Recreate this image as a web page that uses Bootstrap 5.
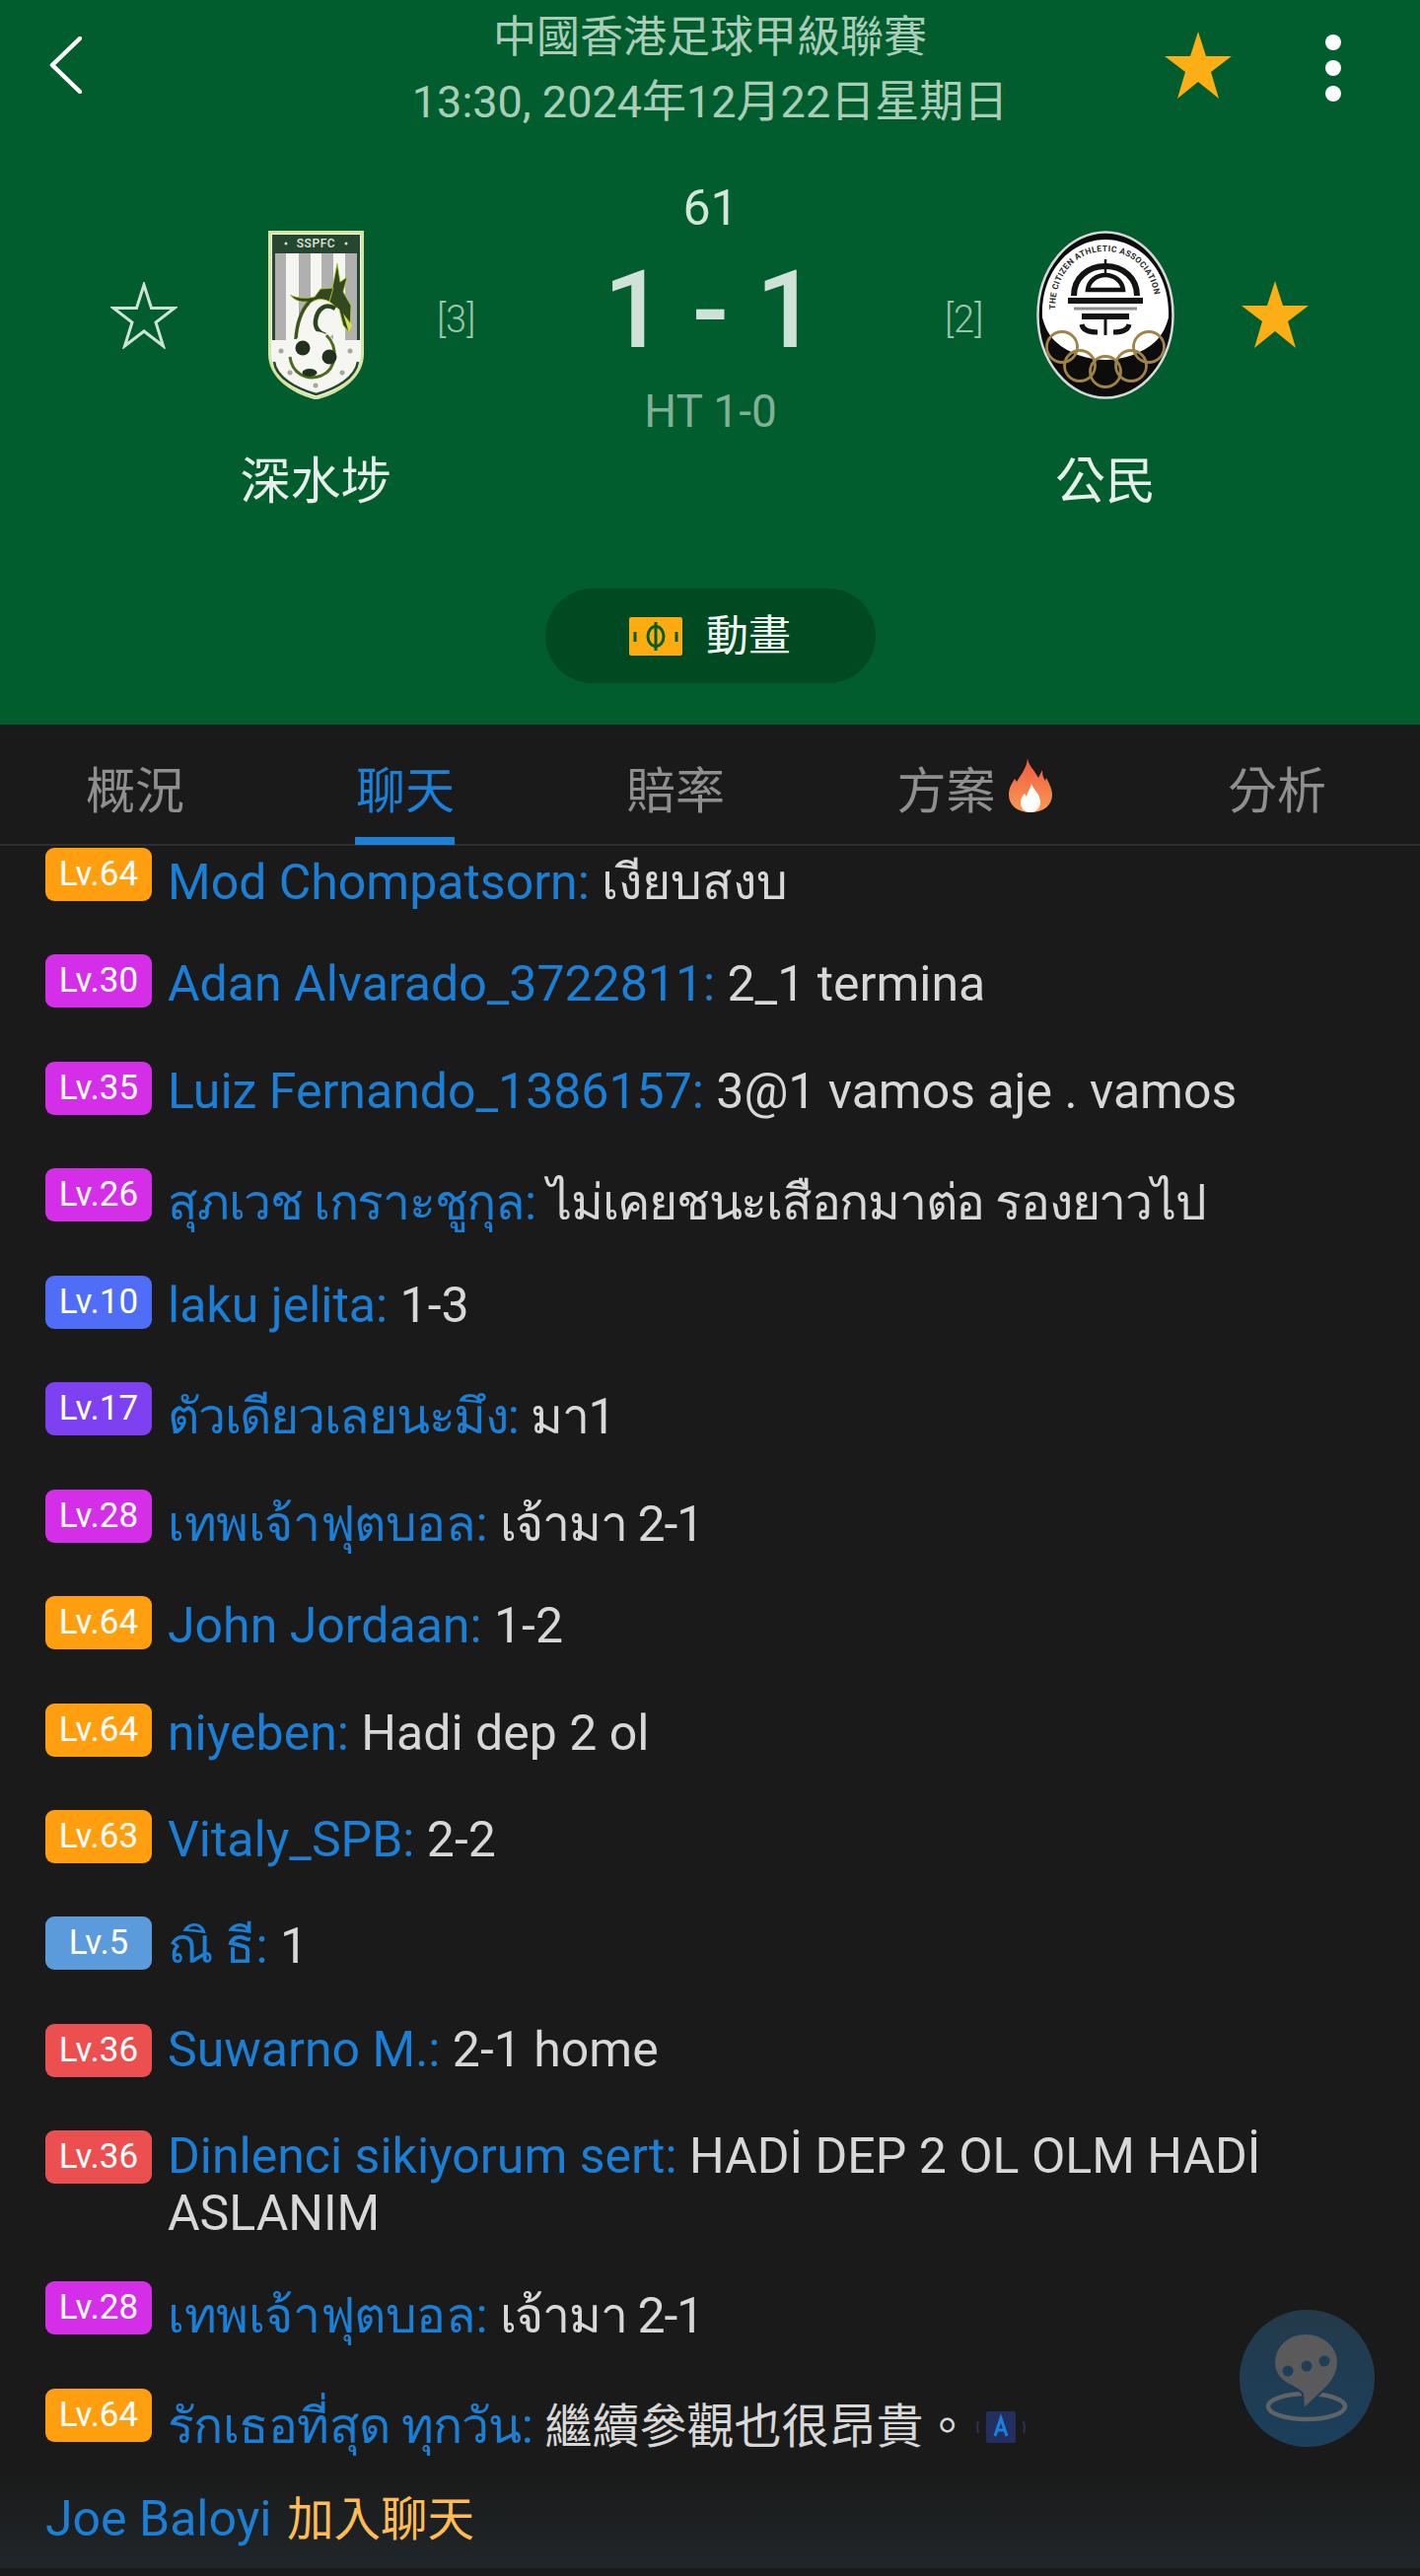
<!DOCTYPE html>
<html lang="zh-Hant">
<head>
    <meta charset="UTF-8">
    <link href="https://cdn.jsdelivr.net/npm/bootstrap@5.3.0/dist/css/bootstrap.min.css" rel="stylesheet">
    <style>
        html, body { height: 100%; }
        body {
            background: #1a1a1a;
            font-family: Roboto, "Noto Sans", "Noto Sans CJK TC", sans-serif;
            color: #d8d8d8;
            overflow: hidden;
        }
        .app-shell { height: 2613px; position: relative; }

        /* header */
        .match-head { background: #015d2d; height: 735px; flex: none; }
        .top-bar { height: 137px; padding-top: 5px; }
        .top-side { width: 300px; flex: none; }
        .back-icon { width: 33px; height: 58px; margin: 32px 0 0 50px; }
        .league { flex: 1; text-align: center; font-size: 44px; line-height: 66px; color: #a9cdb9; white-space: nowrap; }
        .league-time { font-size: 45px; }
        .fav-top { width: 68px; height: 68px; margin-top: 27px; margin-right: 95px; flex: none; }
        .dots { width: 16px; margin: 25px 80px 0 0; flex: none; }
        .dots i { display: block; width: 16px; height: 16px; border-radius: 50%; background: #fff; margin: 5px 0 10px; }

        .score-row { padding: 42px 0 0 112px; }
        .fav-star { width: 68px; height: 68px; margin-top: 107px; flex: none; }
        .team { width: 160px; flex: none; text-align: center; padding-top: 55px; }
        .team-home { margin-left: 60px; }
        .team-logo { height: 171px; display: block; margin: 0 auto; }
        .team-name { font-size: 51px; line-height: 60px; color: #e6efe9; margin-top: 54px; white-space: nowrap; }
        .rank { width: 38px; flex: none; font-size: 38px; line-height: 44px; color: #9cc4ae; margin-top: 123px; text-align: center; font-weight: 300; }
        .rank-home { margin-left: 43px; margin-right: 1px; }
        .rank-away { margin-left: -1px; margin-right: 45px; }
        .centre-col { width: 477px; flex: none; text-align: center; }
        .minute { font-size: 50px; line-height: 60px; color: #d3e6da; margin-top: 2px; }
        .scoreline { font-size: 110px; line-height: 130px; font-weight: 500; color: #cfe2d7; margin-top: 9px; }
        .half-time { font-size: 46px; line-height: 50px; color: #80b096; margin-top: 12px; }
        .fav-away { margin-left: 58px; margin-top: 106px; }

        .anim-pill {
            width: 335px; height: 96px; margin: 78px auto 0 553px; border-radius: 48px;
            background: #014a21; color: #f2f6f3; font-size: 43px; border: 0; padding: 0 0 0 85px;
        }
        .pitch-icon { width: 54px; height: 39px; margin-right: 24px; flex: none; }

        /* tabs */
        .tab-strip { height: 123px; flex: none; background: #1a1a1a; border-bottom: 2px solid #2f2f2f; }
        .tab-link {
            width: 274px; flex: none; text-align: center; font-size: 50px; line-height: 80px; padding-top: 28px; height: 122px; color: #8f8f8f;
            position: relative; text-decoration: none;
        }
        .tab-wide { width: 336px; padding-right: 4px; }
        .tab-on { color: #1a80d8; }
        .tab-on::after { content: ""; position: absolute; left: 86px; width: 101px; bottom: 0; height: 8px; background: #1a80d8; }
        .flame { width: 44px; height: 55px; margin: -20px 0 0 13px; vertical-align: middle; }

        /* chat */
        .chat-list { flex: 1; overflow: hidden; padding: 2px 40px 0 46px; }
        .chat-row { display: flex; align-items: flex-start; margin-bottom: 50.45px; }
        .chat-row-wrap { margin-bottom: 37px; }
        .lv-tag {
            flex: none; width: 108px; height: 54px; border-radius: 9px; color: #fff; font-size: 35px; line-height: 54px;
            text-align: center; margin-right: 16px;
        }
        .lv-orange { background: #ff9f0f; }
        .lv-magenta { background: #d52ee9; }
        .lv-blue { background: #4f6df6; }
        .lv-purple { background: #7d41f2; }
        .lv-sky { background: #5b9bdc; }
        .lv-red { background: #ec4f50; }
        .chat-text { font-size: 50px; line-height: 58px; padding-top: 1px; margin-bottom: -1px; }
        .chat-thai { padding-top: 6px; margin-bottom: -6px; }
        .chat-low { padding-top: 9px; margin-bottom: -9px; }
        .chat-high { padding-top: 0; margin: -3px 0 3px; }
        .chat-name { color: #1b7fd6; }
        .th-tight { letter-spacing: -1.25px; }
        .th-snug { letter-spacing: -.4px; }
        .th-mid { letter-spacing: -.75px; }
        .cjk-msg { font-size: 48px; }
        .trans-mark { width: 50px; height: 32px; margin-left: 6px; vertical-align: 0; }

        /* footer */
        .join-bar {
            flex: none; height: 95px; margin-bottom: 8px; padding: 16px 0 0 46px; font-size: 50px; line-height: 58px;
            background: linear-gradient(#1a1a1a, #20262a);
        }
        .join-bar span { color: #ffbb55; font-size: 47.500px; margin-left: 3px; }
        .room-btn { position: absolute; left: 1257px; top: 2343px; width: 137px; height: 139px; }
    </style>
</head>
<body>
<div class="app-shell d-flex flex-column">
    <div class="match-head">
        <div class="top-bar d-flex">
            <div class="top-side">
                <svg class="back-icon" viewBox="0 0 33 58"><path d="M31 2 3 29l28 27" fill="none" stroke="#fff" stroke-width="4.500" stroke-linecap="round" stroke-linejoin="round"/></svg>
            </div>
            <div class="league">
                <div>中國香港足球甲級聯賽</div>
                <div class="league-time">13:30, 2024年12月22日星期日</div>
            </div>
            <div class="top-side d-flex justify-content-end">
                <svg class="fav-top" viewBox="0 0 68 68"><path d="M34 0l8 25h26L47 41l8 27-21-17-21 17 8-27L0 25h26z" fill="#fcae16"/></svg>
                <div class="dots"><i></i><i></i><i></i></div>
            </div>
        </div>

        <div class="score-row d-flex">
            <svg class="fav-star" viewBox="0 0 68 68"><path d="M34 3l7.500 23.500H65L46 41l7.500 24L34 50 14.500 65 22 41 3 26.500h23.500z" fill="none" stroke="#cfe2d7" stroke-width="3"/></svg>
            <div class="team team-home">
                <svg class="team-logo" viewBox="0 0 97 171">
                    <path d="M1.500 1.500h94V125c0 24-24 39-47 45C25.500 164 1.500 149 1.500 125z" fill="#f5f5f1" stroke="#d9e3a0" stroke-width="3"/>
                    <path d="M4 4h89v19H4z" fill="#26472f"/>
                    <path d="M4 23h3v88H4zM90 23h3v88h-3z" fill="#26472f"/>
                    <path d="M7 23h11v88H7zM31 23h12v88H31zM54 23h12v88H54zM78 23h12v88H78z" fill="#b0b0b0"/>
                    <text x="48.500" y="17" text-anchor="middle" font-size="12" fill="#dfe3dc" font-family="Roboto" font-weight="500" letter-spacing=".6">SSPFC</text>
                    <circle cx="18" cy="13" r="1.500" fill="#dfe3dc"/><circle cx="79" cy="13" r="1.500" fill="#dfe3dc"/>
                    <path d="M41 72c8-7 22-6 31 8l4 18-14 10-34 4c1-16 5-30 13-40z" fill="#f5f5f1"/>
                    <path d="M70 33l3 19 7-5-4 15 8 14-1 28-7-8-4-16-10-8 3-14z" fill="#33481f" stroke="#b9cf2e" stroke-width=".8"/>
                    <path d="M22 65c8 4 18 4 25 2l6-8 13-1-4 14c-12-6-20 0-26 10l4-10c-8 1-14-2-18-7z" fill="#33481f" stroke="#b9cf2e" stroke-width=".8"/>
                    <path d="M41 73c-8 9-12 22-13 37" fill="none" stroke="#3c5618" stroke-width="3.500"/>
                    <path d="M68 79c-10-6-18 0-20 12-1 8 4 13 10 15" fill="none" stroke="#2c4420" stroke-width="4.500"/>
                    <path d="M76 84l6 20 3-8z" fill="#d3e04a"/>
                    <circle cx="47" cy="127" r="25" fill="#f6f6f2"/>
                    <path d="M59 106c12 12 11 34-5 41-16 6-30-3-32-19" fill="none" stroke="#4c6a1c" stroke-width="3"/>
                    <circle cx="35" cy="119" r="7.500" fill="#22301f"/><circle cx="62" cy="128" r="7.500" fill="#22301f"/><ellipse cx="42" cy="144" rx="7.500" ry="4" fill="#22301f"/>
                    <g fill="#a4a89c"><circle cx="13" cy="122" r="2.500"/><circle cx="83" cy="122" r="2.500"/><circle cx="22" cy="144" r="2.500"/><circle cx="75" cy="144" r="2.500"/><circle cx="48" cy="157" r="2.500"/></g>
                    <path d="M6 133c2 16 22 27 42.500 33 21-6 40-17 42.500-33" fill="none" stroke="#26472f" stroke-width="2.500"/>
                </svg>
                <div class="team-name">深水埗</div>
            </div>
            <div class="rank rank-home">[3]</div>
            <div class="centre-col">
                <div class="minute">61</div>
                <div class="scoreline">1 - 1</div>
                <div class="half-time">HT 1-0</div>
            </div>
            <div class="rank rank-away">[2]</div>
            <div class="team">
                <svg class="team-logo" viewBox="0 0 140 171">
                    <ellipse cx="70" cy="85.500" rx="68.500" ry="84" fill="#0c0c0c" stroke="#d8d8d8" stroke-width="2.500"/>
                    <path d="M6 88C4 40 36 9 70 9s66 31 64 79c-2 8-6 18-14 25-12 11-32 18-50 18s-38-7-50-18C12 106 8 96 6 88z" fill="#fff"/>
                    <path id="ringText" d="M19 80C19 42 42 21 70 21s51 21 51 59" fill="none"/>
                    <text font-size="8.500" font-weight="700" fill="#2a2a2a" font-family="Roboto"><textPath href="#ringText" textLength="160" lengthAdjust="spacing">THE CITIZEN ATHLETIC ASSOCIATION</textPath></text>
                    <g fill="none" stroke="#131313" stroke-width="6">
                        <path d="M38 66c0-18 14-30 32-30s32 12 32 30"/>
                        <path d="M70 29v14" stroke-width="2.500"/>
                        <path d="M52 60c1-9 9-15 18-15s17 6 18 15z" stroke-width="4.500"/>
                        <path d="M32 71h76" stroke-width="6"/>
                        <path d="M46 87h48"/>
                        <path d="M46 95c1 6 8 8 16 8M94 95c-1 6-8 8-16 8" stroke-width="5"/>
                        <path d="M70 88v18" stroke-width="3"/>
                    </g>
                    <path d="M38 79h64" stroke="#8c8c8c" stroke-width="3"/>
                    <g fill="none" stroke="#a08345" stroke-width="2.800">
                        <circle cx="26" cy="118" r="15.500"/><circle cx="114" cy="118" r="15.500"/>
                        <circle cx="44" cy="137" r="15.500"/><circle cx="96" cy="137" r="15.500"/><circle cx="70" cy="143" r="15.500"/>
                    </g>
                </svg>
                <div class="team-name">公民</div>
            </div>
            <svg class="fav-star fav-away" viewBox="0 0 68 68"><path d="M34 0l8 25h26L47 41l8 27-21-17-21 17 8-27L0 25h26z" fill="#fcae16"/></svg>
        </div>

        <button class="anim-pill btn d-flex align-items-center" type="button">
            <svg class="pitch-icon" viewBox="0 0 54 39"><rect width="54" height="39" rx="2" fill="#fdab10"/><g stroke="#015d2d" stroke-width="3" fill="none"><path d="M27 5v29"/><ellipse cx="27" cy="19.500" rx="8" ry="10"/><path d="M6 15v10M48 15v10"/></g></svg>
            動畫
        </button>
    </div>

    <div class="tab-strip d-flex">
        <a class="tab-link">概況</a>
        <a class="tab-link tab-on">聊天</a>
        <a class="tab-link">賠率</a>
        <a class="tab-link tab-wide">方案<svg class="flame" viewBox="0 0 44 55"><defs><linearGradient id="flameFill" x1="0" y1="0" x2="0" y2="1"><stop offset="0" stop-color="#ee5a40"/><stop offset="1" stop-color="#fb9a55"/></linearGradient></defs><path d="M19 0c1 7 5 10 8 15l3 5 4-8c0 5 1 8 3 11l1-3c4 7 6 13 6 17 0 11-9 18-22 18S0 48 0 37c0-7 3-11 6-16l2 3c4-7 10-13 11-24z" fill="url(#flameFill)"/><path d="M23 26c1 5 9 10 9 18 0 7-4 11-10 11s-10-4-10-10c0-4 2-7 4-9l2 3c1-5 4-8 5-13z" fill="#fff"/></svg></a>
        <a class="tab-link">分析</a>
    </div>

    <div class="chat-list">
        <div class="chat-row"><div class="lv-tag lv-orange">Lv.64</div><div class="chat-text chat-thai"><span class="chat-name">Mod Chompatsorn:</span> เงียบสงบ</div></div>
        <div class="chat-row"><div class="lv-tag lv-magenta">Lv.30</div><div class="chat-text"><span class="chat-name">Adan Alvarado_3722811:</span> 2_1 termina</div></div>
        <div class="chat-row"><div class="lv-tag lv-magenta">Lv.35</div><div class="chat-text"><span class="chat-name">Luiz Fernando_1386157:</span> 3@1 vamos aje . vamos</div></div>
        <div class="chat-row"><div class="lv-tag lv-magenta">Lv.26</div><div class="chat-text chat-thai"><span class="chat-name th-tight">สุภเวช เกราะชูกุล:</span> <span class="th-tight">ไม่เคยชนะเสือกมาต่อ รองยาวไป</span></div></div>
        <div class="chat-row"><div class="lv-tag lv-blue">Lv.10</div><div class="chat-text"><span class="chat-name">laku jelita:</span> 1-3</div></div>
        <div class="chat-row"><div class="lv-tag lv-purple">Lv.17</div><div class="chat-text chat-thai"><span class="chat-name th-tight">ตัวเดียวเลยนะมึง:</span> <span class="th-tight">มา1</span></div></div>
        <div class="chat-row"><div class="lv-tag lv-magenta">Lv.28</div><div class="chat-text chat-thai"><span class="chat-name th-snug">เทพเจ้าฟุตบอล:</span> <span class="th-tight">เจ้ามา 2-1</span></div></div>
        <div class="chat-row"><div class="lv-tag lv-orange">Lv.64</div><div class="chat-text"><span class="chat-name">John Jordaan:</span> 1-2</div></div>
        <div class="chat-row"><div class="lv-tag lv-orange">Lv.64</div><div class="chat-text"><span class="chat-name">niyeben:</span> Hadi dep 2 ol</div></div>
        <div class="chat-row"><div class="lv-tag lv-orange">Lv.63</div><div class="chat-text"><span class="chat-name">Vitaly_SPB:</span> 2-2</div></div>
        <div class="chat-row"><div class="lv-tag lv-sky">Lv.5</div><div class="chat-text"><span class="chat-name">ณิ ธี:</span> 1</div></div>
        <div class="chat-row"><div class="lv-tag lv-red">Lv.36</div><div class="chat-text chat-high"><span class="chat-name">Suwarno M.:</span> 2-1 home</div></div>
        <div class="chat-row chat-row-wrap"><div class="lv-tag lv-red">Lv.36</div><div class="chat-text chat-high"><span class="chat-name">Dinlenci sikiyorum sert:</span> HADİ DEP 2 OL OLM HADİ ASLANIM</div></div>
        <div class="chat-row"><div class="lv-tag lv-magenta">Lv.28</div><div class="chat-text chat-thai"><span class="chat-name th-snug">เทพเจ้าฟุตบอล:</span> <span class="th-tight">เจ้ามา 2-1</span></div></div>
        <div class="chat-row"><div class="lv-tag lv-orange">Lv.64</div><div class="chat-text chat-low"><span class="chat-name th-mid">รักเธอที่สุด ทุกวัน:</span> <span class="cjk-msg">繼續參觀也很昂貴。</span><svg class="trans-mark" viewBox="0 0 50 32"><rect x="10" width="30" height="32" rx="2" fill="#23305f"/><path d="M2 10 1 16l1 6M48 10l1 6-1 6" fill="none" stroke="#2b3157" stroke-width="2"/><path d="M19 25l6-18 6 18M21 19h8" fill="none" stroke="#1b7fe0" stroke-width="3"/></svg></div></div>
    </div>

    <div class="join-bar"><a class="chat-name text-decoration-none">Joe Baloyi</a> <span>加入聊天</span></div>

    <svg class="room-btn" viewBox="0 0 137 139">
        <defs><linearGradient id="roomFill" x1="0" y1="0" x2="0" y2="1"><stop offset="0" stop-color="#243a4a"/><stop offset="1" stop-color="#1b3f5c"/></linearGradient></defs>
        <ellipse cx="68.500" cy="69.500" rx="68.500" ry="69.500" fill="url(#roomFill)"/>
        <ellipse cx="68" cy="98" rx="39" ry="13" fill="none" stroke="#5f6366" stroke-width="4.500"/>
        <path d="M67 24c18 0 33 13 33 30 0 10-5 17-10 23l-25 24-1-16c-3-3-8-6-14-9-9-5-15-12-15-22 0-17 14-30 32-30z" fill="#5a5a5a" stroke="#1c3d58" stroke-width="2"/>
        <circle cx="49" cy="62" r="5.500" fill="#1f3f58"/><circle cx="68" cy="57" r="5.500" fill="#1f3f58"/><circle cx="86" cy="52" r="5.500" fill="#1f3f58"/>
    </svg>
</div>
<script src="https://cdn.jsdelivr.net/npm/bootstrap@5.3.0/dist/js/bootstrap.bundle.min.js"></script>
</body>
</html>
